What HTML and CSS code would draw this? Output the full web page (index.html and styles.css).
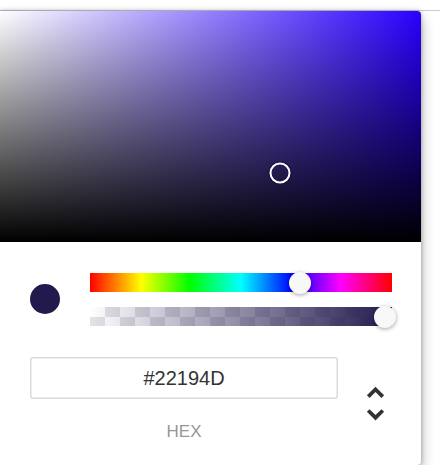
FILE: index.html
```html
<!DOCTYPE html>
<html>
<head>
<meta charset="utf-8">
<link rel="stylesheet" href="styles.css">
</head>
<body>
<div class="topbar"></div>
<div class="picker">
  <div class="saturation">
    <div class="sat-white"></div>
    <div class="sat-black"></div>
    <div class="sat-pointer"></div>
  </div>
  <div class="body">
    <div class="controls">
      <div class="color-col"><div class="swatch"></div></div>
      <div class="toggles">
        <div class="hue"><div class="thumb hue-thumb"></div></div>
        <div class="alpha">
          <div class="alpha-grad"></div>
          <div class="thumb alpha-thumb"></div>
        </div>
      </div>
    </div>
    <div class="fields">
      <div class="field">
        <input class="hex-input" value="#22194D">
        <span class="label">hex</span>
      </div>
      <div class="toggle">
        <svg class="toggle-icon" viewBox="0 0 24 24" width="45" height="45">
          <path fill="#333" d="M12,5.83L15.17,9L16.58,7.59L12,3L7.41,7.59L8.83,9L12,5.83Z"/>
          <path fill="#333" d="M12,18.17L8.83,15L7.42,16.41L12,21L16.59,16.41L15.17,15L12,18.17Z"/>
        </svg>
      </div>
    </div>
  </div>
</div>
</body>
</html>
```

FILE: styles.css
```css
html, body {
  margin: 0;
  padding: 0;
  background: #fff;
  font-family: "Liberation Sans", Arial, sans-serif;
}

.topbar {
  height: 10px;
  border-bottom: 1px solid #cbcbcb;
}

.picker {
  width: 421px;
  background: #fff;
  border-radius: 0 4px 4px 0;
  box-shadow: 0 0 4px rgba(0,0,0,0.3), 0 7px 14px rgba(0,0,0,0.3);
}

.saturation {
  position: relative;
  height: 231px;
  background: #2a00ff;
  border-radius: 0 4px 0 0;
  overflow: hidden;
}

.sat-white {
  position: absolute;
  inset: 0;
  background: linear-gradient(to right, #fff, rgba(255,255,255,0));
}

.sat-black {
  position: absolute;
  inset: 0;
  background: linear-gradient(to top, #000, rgba(0,0,0,0));
}

.sat-pointer {
  position: absolute;
  left: 280px;
  top: 162px;
  width: 21px;
  height: 21px;
  box-sizing: border-box;
  border: 2px solid #fff;
  border-radius: 50%;
  transform: translate(-50%, -50%);
  box-shadow: 0 0 1px 1px rgba(0,0,0,0.25);
}

.body {
  padding: 31px 29px 23px 30px;
}

.controls {
  display: flex;
}

.color-col {
  width: 60px;
  flex: none;
}

.swatch {
  margin-top: 11px;
  width: 30px;
  height: 30px;
  border-radius: 50%;
  background: #22194d;
}

.toggles {
  flex: 1;
}

.hue {
  position: relative;
  height: 19px;
  margin-bottom: 15px;
  background: linear-gradient(to right, #f00 0%, #ff0 17%, #0f0 33%, #0ff 50%, #00f 67%, #f0f 83%, #f00 100%);
}

.alpha {
  position: relative;
  height: 19px;
  background-color: #fff;
  background-image: repeating-conic-gradient(#e3e3e6 0 25%, #ffffff 0 50%);
  background-size: 30px 20px;
}

.alpha-grad {
  position: absolute;
  inset: 0;
  background: linear-gradient(to right, rgba(34,25,77,0), rgb(34,25,77));
}

.thumb {
  position: absolute;
  width: 22px;
  height: 22px;
  border-radius: 50%;
  background: #f8f8f8;
  box-shadow: 0 1px 4px 0 rgba(0,0,0,0.37);
}

.hue-thumb {
  left: calc(69.5% - 11px);
  top: -1.5px;
}

.alpha-thumb {
  left: calc(100% - 18px);
  top: -1.5px;
}

.fields {
  display: flex;
  padding-top: 31px;
}

.field {
  flex: 1;
  display: flex;
  flex-direction: column;
}

.hex-input {
  box-sizing: border-box;
  width: 100%;
  height: 42px;
  margin: 0;
  padding: 0;
  border: none;
  border-radius: 3px;
  box-shadow: inset 0 0 0 1.5px #dadada;
  font-family: "Liberation Sans", Arial, sans-serif;
  font-size: 20px;
  color: #333;
  text-align: center;
  outline: none;
  background: #fff;
}

.label {
  display: block;
  margin-top: 23px;
  line-height: 20px;
  font-size: 17px;
  color: #969696;
  text-transform: uppercase;
  text-align: center;
}

.toggle {
  width: 54px;
  flex: none;
  text-align: right;
}

.toggle-icon {
  display: block;
  margin: 24px -6px 0 auto;
}
```
